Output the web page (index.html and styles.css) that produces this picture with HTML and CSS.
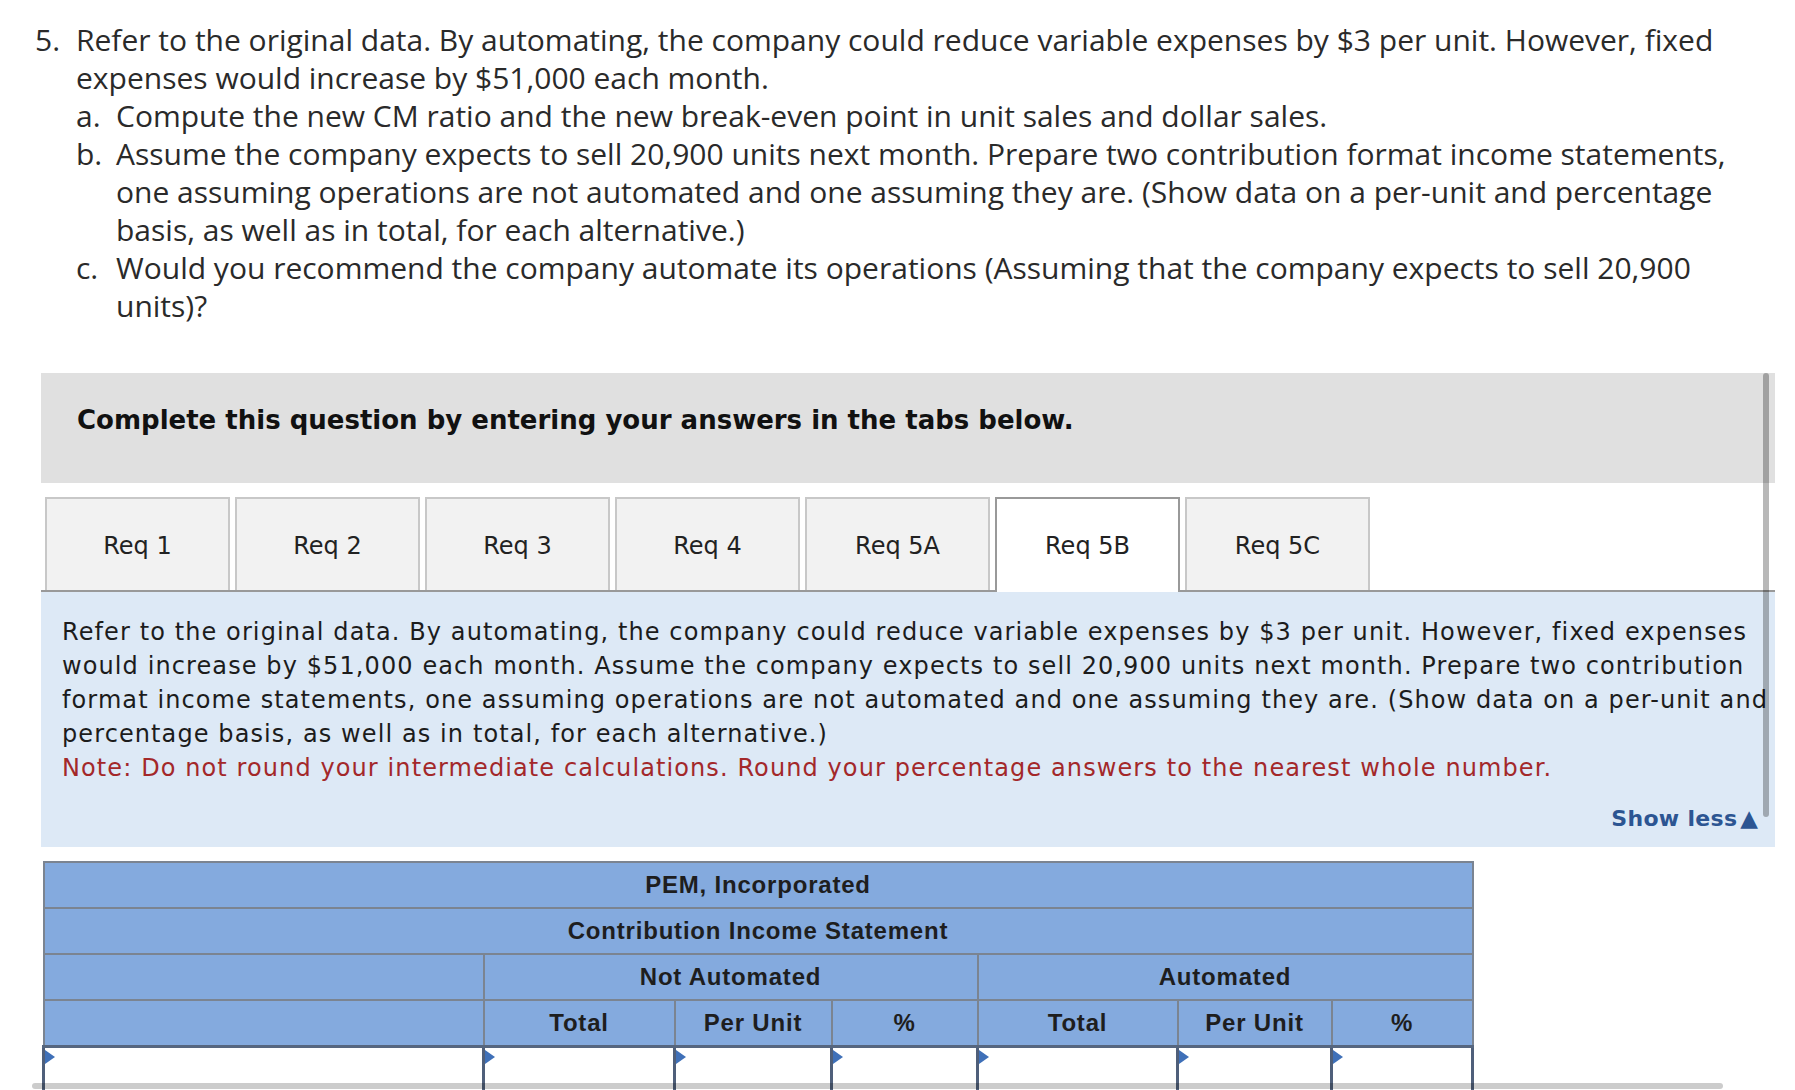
FILE: index.html
```html
<!DOCTYPE html>
<html lang="en">
<head>
    <meta charset="UTF-8">
    <title>PEM, Incorporated - Req 5B</title>
    <link rel="stylesheet" href="styles.css">
</head>
<body>

<div class="question">
    <span class="num">5.</span>
    <div class="question-body">
        <p>Refer to the original data. By automating, the company could reduce variable expenses by $3 per unit. However, fixed expenses would increase by $51,000 each month.</p>
        <ol class="parts">
            <li><span class="mark">a.</span><span>Compute the new CM ratio and the new break-even point in unit sales and dollar sales.</span></li>
            <li><span class="mark">b.</span><span>Assume the company expects to sell 20,900 units next month. Prepare two contribution format income statements, one assuming operations are not automated and one assuming they are. (Show data on a per-unit and percentage basis, as well as in total, for each alternative.)</span></li>
            <li><span class="mark">c.</span><span>Would you recommend the company automate its operations (Assuming that the company expects to sell 20,900 units)?</span></li>
        </ol>
    </div>
</div>

<div class="assignment">
    <div class="instructions">Complete this question by entering your answers in the tabs below.</div>

    <div class="tabs">
        <button class="tab">Req 1</button>
        <button class="tab">Req 2</button>
        <button class="tab">Req 3</button>
        <button class="tab">Req 4</button>
        <button class="tab">Req 5A</button>
        <button class="tab active">Req 5B</button>
        <button class="tab">Req 5C</button>
    </div>

    <div class="panel">
        <p class="panel-text">Refer to the original data. By automating, the company could reduce variable expenses by $3 per unit. However, fixed expenses<br>
        would increase by $51,000 each month. Assume the company expects to sell 20,900 units next month. Prepare two contribution<br>
        format income statements, one assuming operations are not automated and one assuming they are. (Show data on a per-unit and<br>
        percentage basis, as well as in total, for each alternative.)<br>
        <span class="note">Note: Do not round your intermediate calculations. Round your percentage answers to the nearest whole number.</span></p>
        <div class="show-less">Show less<span class="arrow">&#9650;</span></div>
    </div>

    <table class="statement">
        <colgroup>
            <col style="width:440px">
            <col style="width:191px">
            <col style="width:157px">
            <col style="width:146px">
            <col style="width:200px">
            <col style="width:154px">
            <col style="width:141px">
        </colgroup>
        <tr><th colspan="7">PEM, Incorporated</th></tr>
        <tr><th colspan="7">Contribution Income Statement</th></tr>
        <tr><th></th><th colspan="3">Not Automated</th><th colspan="3">Automated</th></tr>
        <tr class="last-head"><th></th><th>Total</th><th>Per Unit</th><th>%</th><th>Total</th><th>Per Unit</th><th>%</th></tr>
        <tr class="entry"><td></td><td></td><td></td><td></td><td></td><td></td><td></td></tr>
    </table>

    <div class="vscroll"></div>
</div>

<div class="hscroll"></div>

</body>
</html>
```
FILE: styles.css
```css
html, body {
    margin: 0;
    height: 1090px;
    overflow: hidden;
}
body {
    position: relative;
    background: #fff;
    color: #222;
    font-family: "DejaVu Sans", Verdana, sans-serif;
}

/* question text */
.question {
    display: flex;
    padding: 21px 0 0 35px;
    width: 1703px;
    font-family: "Open Sans", sans-serif;
    font-size: 30px;
    line-height: 38px;
    color: #2a2a2a;
}
.num {
    flex: 0 0 41px;
}
.question-body {
    flex: 1;
}
.question-body p {
    margin: 0;
}
.parts {
    list-style: none;
    margin: 0;
    padding: 0;
}
.parts li {
    display: flex;
}
.mark {
    flex: 0 0 40px;
}

/* assignment box */
.assignment {
    position: relative;
    margin: 48px 0 0 41px;
    width: 1734px;
}
.instructions {
    box-sizing: border-box;
    height: 110px;
    padding: 32px 36px 0;
    background-color: #e0e0e0;
    font-weight: bold;
    font-size: 26px;
    line-height: 30px;
    color: #111;
}

.tabs {
    display: flex;
    align-items: flex-end;
    gap: 5px;
    margin-top: 14px;
    padding-left: 4px;
    border-bottom: 2px solid #999;
}
.tab {
    box-sizing: border-box;
    width: 185px;
    height: 93px;
    padding: 2px 0 0;
    border: 2px solid #c8c8c8;
    border-bottom: none;
    background-color: #f2f2f2;
    font-family: "DejaVu Sans", Verdana, sans-serif;
    font-size: 24px;
    color: #222;
    cursor: pointer;
}
.tab.active {
    position: relative;
    height: 95px;
    margin-bottom: -2px;
    padding-top: 0;
    border-color: #999;
    background-color: #fff;
}

.panel {
    box-sizing: border-box;
    height: 255px;
    padding: 23px 17px 0 21px;
    background-color: #dde9f6;
}
.panel-text {
    margin: 0;
    width: 1760px;
    font-size: 24px;
    letter-spacing: 1.1px;
    line-height: 34px;
    color: #1c1c1c;
}
.note {
    color: #a3282a;
}
.show-less {
    margin-top: 19px;
    text-align: right;
    font-weight: bold;
    font-size: 22px;
    letter-spacing: 0.3px;
    line-height: 28px;
    color: #2c5592;
}
.arrow {
    font-size: 23px;
    margin-left: 3px;
    letter-spacing: 0;
}

/* income statement */
.statement {
    table-layout: fixed;
    width: 1429px;
    margin: 14px 0 0 1px;
    border-collapse: collapse;
    font-family: "Liberation Sans", Arial, sans-serif;
}
.statement th {
    height: 44px;
    padding: 0;
    border: 2px solid #7b8491;
    background-color: #84aade;
    font-size: 24px;
    letter-spacing: 0.8px;
    font-weight: bold;
    color: #1e1e1e;
    text-align: center;
}
.last-head th {
    border-bottom: 3px solid #56667f;
}
.entry td {
    position: relative;
    height: 44px;
    padding: 0;
    border-left: 3px solid #4f5f7a;
    border-right: 3px solid #4f5f7a;
    background: #fff;
}
.entry td::before {
    content: "";
    position: absolute;
    left: 0;
    top: 2px;
    border-top: 7px solid transparent;
    border-bottom: 7px solid transparent;
    border-left: 10px solid #3f70b8;
}

/* overlay scrollbars */
.vscroll {
    position: absolute;
    left: 1722px;
    top: 0;
    width: 6px;
    height: 444px;
    border-radius: 3px;
    background: rgba(0, 0, 0, 0.28);
}
.hscroll {
    position: absolute;
    left: 32px;
    top: 1083px;
    width: 1691px;
    height: 6px;
    border-radius: 3px;
    background: rgba(0, 0, 0, 0.2);
}
```
